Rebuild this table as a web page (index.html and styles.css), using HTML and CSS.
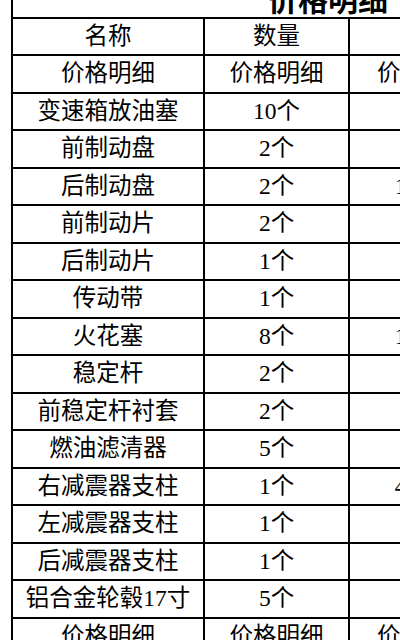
FILE: index.html
```html
<!DOCTYPE html>
<html lang="zh-CN">
<head>
<meta charset="utf-8">
<title>价格明细</title>
<link rel="stylesheet" href="styles.css">
</head>
<body>
<div class="wrap">
<table class="price">
  <colgroup>
    <col class="c1"><col class="c2"><col class="c3"><col class="c4">
  </colgroup>
  <tr class="title"><td colspan="4">价格明细</td></tr>
  <tr><td>名称</td><td>数量</td><td>单价</td><td>总价</td></tr>
  <tr><td>价格明细</td><td>价格明细</td><td>价格明细</td><td>价格明细</td></tr>
  <tr><td>变速箱放油塞</td><td>10个</td><td>20元</td><td>200元</td></tr>
  <tr><td>前制动盘</td><td>2个</td><td>80元</td><td>160元</td></tr>
  <tr><td>后制动盘</td><td>2个</td><td>150元</td><td>300元</td></tr>
  <tr><td>前制动片</td><td>2个</td><td>60元</td><td>120元</td></tr>
  <tr><td>后制动片</td><td>1个</td><td>50元</td><td>50元</td></tr>
  <tr><td>传动带</td><td>1个</td><td>90元</td><td>90元</td></tr>
  <tr><td>火花塞</td><td>8个</td><td>120元</td><td>960元</td></tr>
  <tr><td>稳定杆</td><td>2个</td><td>70元</td><td>140元</td></tr>
  <tr><td>前稳定杆衬套</td><td>2个</td><td>30元</td><td>60元</td></tr>
  <tr><td>燃油滤清器</td><td>5个</td><td>40元</td><td>200元</td></tr>
  <tr><td>右减震器支柱</td><td>1个</td><td>450元</td><td>450元</td></tr>
  <tr><td>左减震器支柱</td><td>1个</td><td>45元</td><td>45元</td></tr>
  <tr><td>后减震器支柱</td><td>1个</td><td>45元</td><td>45元</td></tr>
  <tr><td>铝合金轮毂17寸</td><td>5个</td><td>80元</td><td>400元</td></tr>
  <tr><td>价格明细</td><td>价格明细</td><td>价格明细</td><td>价格明细</td></tr>
</table>
</div>
</body>
</html>
```
FILE: styles.css
```css
html, body {
  margin: 0;
  padding: 0;
  background: #ffffff;
  overflow: hidden;
}
.wrap {
  width: 400px;
  height: 640px;
  overflow: hidden;
}
.price {
  border-collapse: collapse;
  table-layout: fixed;
  width: 632px;
  margin-top: -20px;
  margin-left: 11px;
  font-family: "Liberation Serif", "Noto Sans CJK SC", serif;
  font-size: 23.5px;
  color: #000;
}
.c1 { width: 192px; }
.c2 { width: 145px; }
.c3 { width: 150px; }
.c4 { width: 145px; }
.price td {
  border: 2px solid #000;
  height: 37.5px;
  padding: 0;
  text-align: center;
  vertical-align: middle;
  white-space: nowrap;
  box-sizing: border-box;
  line-height: 1;
}
.price tr.title td {
  font-weight: bold;
  font-size: 30px;
  border-top: none;
  font-family: "Noto Sans CJK SC", sans-serif;
}
```
